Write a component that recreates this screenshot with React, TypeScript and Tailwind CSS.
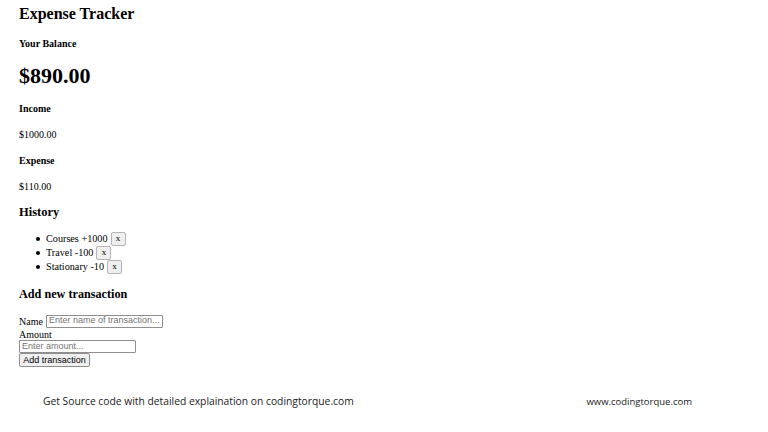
import { useState } from 'react'

interface Transaction {
  id: number
  text: string
  amount: number
}

const initial: Transaction[] = [
  { id: 1, text: 'Courses', amount: 1000 },
  { id: 2, text: 'Travel', amount: -100 },
  { id: 3, text: 'Stationary', amount: -10 },
]

const serif = 'font-["Liberation_Serif","Times_New_Roman",serif]'

export default function App() {
  const [transactions, setTransactions] = useState<Transaction[]>(initial)
  const [name, setName] = useState('')
  const [amount, setAmount] = useState('')

  const income = transactions.filter(t => t.amount > 0).reduce((s, t) => s + t.amount, 0)
  const expense = transactions.filter(t => t.amount < 0).reduce((s, t) => s - t.amount, 0)
  const balance = income - expense

  function addTransaction() {
    const value = Number(amount)
    if (!name || !value) return
    setTransactions(prev => [...prev, { id: Date.now(), text: name, amount: value }])
    setName('')
    setAmount('')
  }

  return (
    <div className="w-[768px] h-[432px] bg-white text-black overflow-hidden">
      <div className={`${serif} pl-[19px]`}>
        <div className="h-[28px] flex items-center text-[16px] font-bold">Expense Tracker</div>
        <div className="h-[30px] flex items-center text-[10px] font-bold">Your Balance</div>
        <div className="h-[34px] flex items-center text-[22px] font-bold">${balance.toFixed(2)}</div>
        <div className="h-[32px] flex items-center text-[10px] font-bold">Income</div>
        <div className="h-[20px] flex items-center text-[10px]">${income.toFixed(2)}</div>
        <div className="h-[32px] flex items-center text-[10px] font-bold">Expense</div>
        <div className="h-[20px] flex items-center text-[10px]">${expense.toFixed(2)}</div>
        <div className="h-[32px] flex items-center text-[12.5px] font-bold">History</div>

        {/* History list */}
        <ul className="h-[49px] pt-[4px] pl-[16px] text-[10.2px]">
          {transactions.map(t => (
            <li key={t.id} className="h-[14px] flex items-center">
              <span className="w-[11px] flex">
                <span className="ml-[1px] w-[4px] h-[4px] rounded-full bg-black" />
              </span>
              <span>
                {t.text} {t.amount > 0 ? '+' : ''}{t.amount}
              </span>
              <button
                onClick={() => setTransactions(prev => prev.filter(x => x.id !== t.id))}
                className="ml-[3px] inline-flex items-center justify-center w-[15px] h-[14px] pb-[1px] text-[9px] leading-none bg-[#efefef] border border-[#b5b5b5] rounded-[2px] font-['Liberation_Serif',serif]"
              >
                x
              </button>
            </li>
          ))}
        </ul>

        <div className="h-[34px] flex items-center text-[12.2px] font-bold">Add new transaction</div>

        {/* Form */}
        <div className="mt-[3px] h-[14px] flex items-center text-[10px]">
          <label className="mr-[3px]">Name</label>
          <input
            value={name}
            onChange={e => setName(e.target.value)}
            placeholder="Enter name of transaction..."
            className="w-[117px] h-[13px] px-[2px] text-[9px] font-['Liberation_Sans',Arial,sans-serif] border border-[#8f8f8f] rounded-[1px] placeholder:text-[#757575] outline-none"
          />
        </div>
        <div className="h-[12px] flex items-center text-[10px]">Amount</div>
        <div className="h-[13px] flex">
          <input
            value={amount}
            onChange={e => setAmount(e.target.value)}
            placeholder="Enter amount..."
            className="w-[117px] h-[13px] px-[2px] text-[9px] font-['Liberation_Sans',Arial,sans-serif] border border-[#8f8f8f] rounded-[1px] placeholder:text-[#757575] outline-none"
          />
        </div>
        <div className="h-[14px] flex">
          <button
            onClick={addTransaction}
            className="w-[71px] h-[14px] text-[9px] leading-none font-['Liberation_Sans',Arial,sans-serif] bg-[#efefef] border border-[#8f8f8f] rounded-[2px]"
          >
            Add transaction
          </button>
        </div>
      </div>

      {/* Footer */}
      <div className="mt-[27px] flex justify-between items-center h-[16px] pl-[43px] pr-[76px] text-[#222] font-['Open_Sans',sans-serif]">
        <span className="text-[10.3px]">Get Source code with detailed explaination on codingtorque.com</span>
        <span className="text-[9.5px]">www.codingtorque.com</span>
      </div>
    </div>
  )
}
